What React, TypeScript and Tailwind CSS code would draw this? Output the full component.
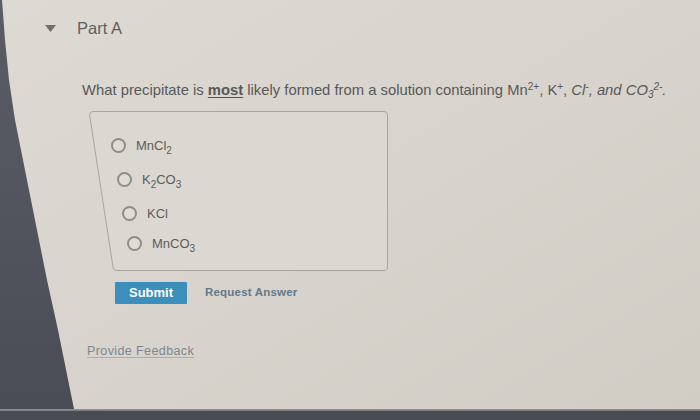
const sub = "text-[10px] align-[-2px]";

const options = [
  { label: <>MnCl<sub className={sub}>2</sub></>, indent: "ml-[22px]", gap: "mt-[27px]" },
  { label: <>K<sub className={sub}>2</sub>CO<sub className={sub}>3</sub></>, indent: "ml-[28px]", gap: "mt-[19px]" },
  { label: <>KCl</>, indent: "ml-[33px]", gap: "mt-[19px]" },
  { label: <>MnCO<sub className={sub}>3</sub></>, indent: "ml-[38px]", gap: "mt-[15px]" },
];

const Radio = () => (
  <span className="w-[15px] h-[15px] rounded-full border-2 border-[#8f8d8a] bg-[#e0ddd7] shrink-0" />
);

export default function App() {
  return (
    <div
      className="relative w-[700px] h-[420px] overflow-hidden bg-gradient-to-br from-[#dddad3] via-[#d8d4cd] to-[#d1ccc4] text-[#5a5a5a]"
      style={{ fontFamily: '"Liberation Sans", Arial, sans-serif' }}
    >
      {/* header */}
      <div className="flex items-center pt-[19px] pl-[45px]">
        <svg width="11" height="7" viewBox="0 0 11 7">
          <path d="M0 0 H11 L5.5 7 Z" fill="#6f6f6f" />
        </svg>
        <span className="ml-[21px] text-[16.5px] leading-[18px] text-[#5e5e5e]">Part A</span>
      </div>

      {/* question */}
      <p className="mt-[44px] ml-[82px] text-[14.8px] leading-[18px] text-[#585858] whitespace-nowrap">
        What precipitate is <span className="font-bold underline underline-offset-2">most</span> likely formed from a solution containing Mn
        <sup className="text-[10px]">2+</sup>, K<sup className="text-[10px]">+</sup>,{" "}
        <span className="italic">
          Cl<sup className="text-[10px]">-</sup>, and CO<sub className="text-[10px]">3</sub>
          <sup className="text-[10px]">2-</sup>.
        </span>
      </p>

      {/* answer box */}
      <div className="relative mt-[12px] ml-[89px] w-[300px] h-[160px]">
        <svg className="absolute inset-0" width="300" height="160" viewBox="0 0 300 160">
          <path
            d="M4 0.5 H295 Q298.5 0.5 298.5 4 V155 Q298.5 159.5 295 159.5 H28 Q24.5 159.5 24 156 L0.6 4 Q0.5 0.5 4 0.5 Z"
            fill="#dbd8d1"
            stroke="#a9a59f"
            strokeWidth="1"
          />
        </svg>
        <div className="relative flex flex-col">
          {options.map((o, i) => (
            <div key={i} className={`flex items-center gap-[10px] ${o.indent} ${o.gap}`}>
              <Radio />
              <span className="text-[13px] leading-[14px] text-[#5c5c5c]">{o.label}</span>
            </div>
          ))}
        </div>
      </div>

      {/* actions */}
      <div className="flex items-center mt-[11px] ml-[115px]">
        <button className="w-[72px] h-[22px] bg-[#3c8ebd] text-white text-[13px] font-semibold rounded-[1px]">
          Submit
        </button>
        <span className="ml-[18px] text-[11.5px] font-bold text-[#62798a] tracking-[0.2px]">Request Answer</span>
      </div>

      <p className="mt-[38px] ml-[87px] text-[12.5px] text-[#7b8790] underline underline-offset-2 decoration-[#a7adb1] tracking-[0.4px]">
        Provide Feedback
      </p>

      {/* monitor bezel seen at an angle */}
      <svg className="absolute inset-0 pointer-events-none" width="700" height="420" viewBox="0 0 700 420">
        <defs>
          <linearGradient id="bz" x1="0" y1="0" x2="0" y2="1">
            <stop offset="0" stopColor="#5a5c66" />
            <stop offset="1" stopColor="#4a4d56" />
          </linearGradient>
        </defs>
        <polygon points="0,0 2,0 5,40 9,80 15,120 47,280 58,330 74,409 0,409" fill="url(#bz)" />
        <rect x="0" y="409" width="700" height="1.5" fill="#8b8e93" />
        <rect x="0" y="410.5" width="700" height="10" fill="#484c54" />
      </svg>
    </div>
  );
}
